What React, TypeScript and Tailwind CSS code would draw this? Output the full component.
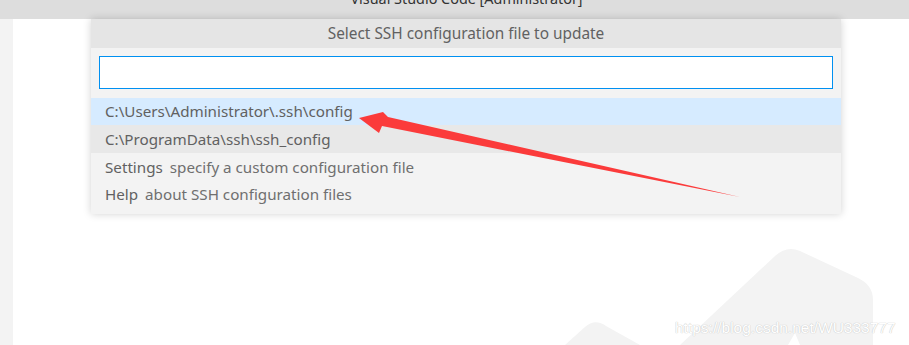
import React from "react";

export default function App() {
  const font = { fontFamily: '"Segoe UI", "Noto Sans", "Open Sans", sans-serif' };
  return (
    <div className="relative w-[909px] h-[345px] overflow-hidden bg-white flex flex-col" style={font}>
      {/* title bar */}
      <div className="h-[19px] shrink-0 bg-[#dddddd] overflow-hidden flex justify-center">
        <span className="block -mt-[12px] leading-[22px] text-[14.4px] text-[#333333] pl-[24px]">
          Visual Studio Code [Administrator]
        </span>
      </div>
      <div className="flex flex-1 min-h-0">
        <div className="w-[13px] bg-[#f3f3f3] shrink-0" />
        <div className="relative flex-1 bg-white">
          {/* watermark shapes */}
          <svg className="absolute left-0 top-0" width="896" height="326" viewBox="13 19 896 326">
            <path d="M565 345 L585 327 Q595 318 606 326 L640 345 Z" fill="#f3f3f3" />
            <path
              d="M680 345 L775 256 Q787 245 800 251 L858 278 Q873 285 873 300 L873 345 L800 345 L795 333 L788 345 Z"
              fill="#f3f3f3"
            />
          </svg>
          <div
            className="absolute left-[662px] top-[297px] text-[15.5px] text-white [text-shadow:0_0_1px_#c8c8c8,0_0_1px_#c8c8c8]"
            style={{ fontFamily: '"Liberation Sans", Arial, sans-serif' }}
          >
            https://blog.csdn.net/WU333777
          </div>
          {/* quick pick */}
          <div className="relative ml-[78px] w-[750px] bg-[#f3f3f3] shadow-[0_0_8px_rgba(0,0,0,0.18)] flex flex-col pb-[6px]">
            <div className="h-[29px] bg-[#e5e5e5] flex items-center justify-center text-[15.4px] text-[#616161]">
              Select SSH configuration file to update
            </div>
            <div className="px-[8px] pt-[8px] pb-[9px]">
              <div className="h-[33px] bg-white border border-[#0090f1]" />
            </div>
            <div className="flex flex-col text-[15.2px] text-[#616161]">
              <div className="h-[27px] bg-[#d6ebff] flex items-center pl-[14px]">C:\Users\Administrator\.ssh\config</div>
              <div className="h-[28px] bg-[#e8e8e8] flex items-center pl-[14px]">C:\ProgramData\ssh\ssh_config</div>
              <div className="h-[28px] flex items-center pl-[14px]">
                <span>Settings</span>
                <span className="ml-[7px] text-[#6f6f6f]">specify a custom configuration file</span>
              </div>
              <div className="h-[27px] flex items-center pl-[14px]">
                <span>Help</span>
                <span className="ml-[7px] text-[#6f6f6f]">about SSH configuration files</span>
              </div>
            </div>
          </div>
        </div>
      </div>
      {/* red arrow */}
      <svg className="absolute left-0 top-0 pointer-events-none" width="909" height="345" viewBox="0 0 909 345">
        <polygon points="359,118 383,112 388,117 740,197 382,126 379,133" fill="#fb3b3b" />
      </svg>
    </div>
  );
}
